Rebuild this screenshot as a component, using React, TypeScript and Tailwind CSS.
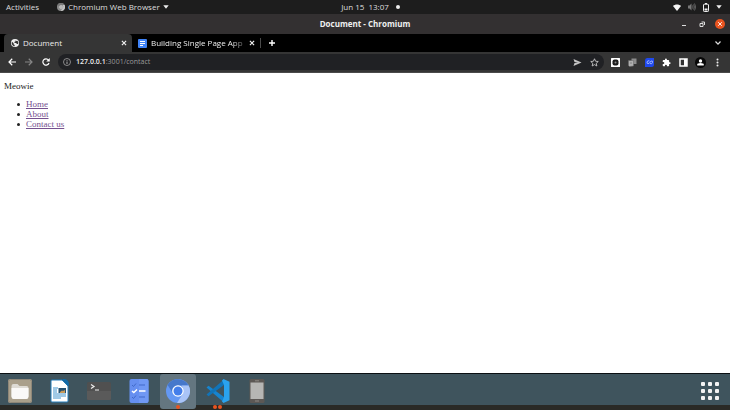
import React from "react";

type IconProps = { className?: string };

const Globe = ({ className }: IconProps) => (
  <svg viewBox="0 0 24 24" className={className} aria-hidden="true">
    <circle cx="12" cy="12" r="12" fill="#f1f1f1" />
    <path d="M3 8l5 5v3l3 2v4C6 21 2 17 2 12zM11 3l3 4-4 2 1 3h5l1 3h4c2-3 1-8-2-10l-4 1z" fill="#353535" />
  </svg>
);

const GrayChromium = () => (
  <svg viewBox="0 0 24 24" className="size-2" aria-hidden="true">
    <circle cx="12" cy="12" r="12" fill="#8d8d8d" />
    <path d="M2 5a12 12 0 0 1 20.500 1H12a6 6 0 0 0-6 6z" fill="#777" />
    <path d="M22.500 6a12 12 0 0 1-11 18l5.500-9a6 6 0 0 0-1-9z" fill="#c4c4c4" />
    <circle cx="12" cy="12" r="4.500" fill="#b5b5b5" stroke="#d4d4d4" strokeWidth="1.500" />
  </svg>
);

const Caret = ({ className }: IconProps) => (
  <svg viewBox="0 0 6 4" className={className ?? "h-1 w-1.5"} aria-hidden="true">
    <path d="M0.300 0.300h5.400L3 3.700z" fill="#eee" />
  </svg>
);

const Cross = () => (
  <svg viewBox="0 0 10 10" className="size-1.5" aria-hidden="true">
    <path d="M1.500 1.500l7 7m0-7l-7 7" stroke="#f2f2f2" strokeWidth="1.900" />
  </svg>
);

const Arrow = ({ className }: IconProps) => (
  <svg viewBox="0 0 16 16" className={className} fill="none" stroke="currentColor" strokeWidth="2.400" aria-hidden="true">
    <path d="M16 8H2M8.500 1.500L2 8l6.500 6.500" />
  </svg>
);

function TopBar() {
  return (
    <header className="grid h-3.5 grid-cols-[1fr_auto_1fr] items-center bg-[#1d1d1d] text-[#dedede]">
      <div className="flex items-center gap-[18px] pl-1.5">
        <button>Activities</button>
        <button className="flex items-center gap-[3px]">
          <GrayChromium />
          <span>Chromium Web Browser</span>
          <Caret />
        </button>
      </div>
      <time className="whitespace-pre">Jun 15  13:07</time>
      <div className="flex items-center justify-between pr-2 pl-[7px]">
        <span className="size-1 rounded-full bg-[#eee]" />
        <div className="flex items-center gap-[7px]">
          <svg viewBox="0 0 16 14" className="h-[7px] w-2" aria-label="Wi-Fi">
            <path d="M0 4C4 0 12 0 16 4L8 14z" fill="#f4f4f4" />
          </svg>
          <svg viewBox="0 0 16 16" className="size-2" fill="none" stroke="#777" strokeWidth="1.500" aria-label="Volume">
            <path d="M0 5h3l4-4v14l-4-4H0z" fill="#777" stroke="none" />
            <path d="M9 5q2 3 0 6M11 3q4 5 0 10M13 1q5 7 0 14" />
          </svg>
          <svg viewBox="0 0 12 18" className="h-[9px] w-1.5" aria-label="Battery">
            <path d="M4 0h4v2H4z" fill="#eee" />
            <rect x="1" y="2.500" width="10" height="14.500" rx="1.500" fill="none" stroke="#eee" strokeWidth="2" />
            <path d="M3 11h6v4H3z" fill="#eee" />
          </svg>
          <Caret />
        </div>
      </div>
    </header>
  );
}

function TitleBar() {
  return (
    <div className="grid h-5 grid-cols-[1fr_auto_1fr] items-center bg-[#333031] font-bold text-[#f0f0f0]">
      <span />
      <h1>Document - Chromium</h1>
      <div className="flex items-center justify-end gap-2 pr-[5px]">
        <button aria-label="Minimise" className="flex size-2.5 items-center justify-center">
          <svg viewBox="0 0 10 10" className="size-2.5"><path d="M3 6.500h4" stroke="#ddd" /></svg>
        </button>
        <button aria-label="Restore" className="size-2.5">
          <svg viewBox="0 0 10 10" className="size-2.5" fill="none" stroke="#ddd">
            <path d="M3 4.500h3v3H3zM4.500 3h3v3" strokeWidth="1" />
          </svg>
        </button>
        <button aria-label="Close" className="size-2.5">
          <svg viewBox="0 0 10 10" className="size-2.5">
            <circle cx="5" cy="5" r="5" fill="#e95420" />
            <path d="M3.200 3.200l3.600 3.600m0-3.600L3.200 6.800" stroke="#fff" strokeWidth="0.900" />
          </svg>
        </button>
      </div>
    </div>
  );
}

function TabStrip() {
  return (
    <div className="flex h-[18px] items-center bg-black pr-2 pl-1 text-[#ececec]">
      <div className="flex h-full w-32 items-center rounded-t-[4px] bg-[#353535] pr-[5px] pl-[7px]">
        <Globe className="mr-1 size-2" />
        <span className="flex-1">Document</span>
        <button aria-label="Close tab"><Cross /></button>
      </div>
      <div className="flex h-full w-32 items-center pr-[5px] pl-1.5">
        <svg viewBox="0 0 18 18" className="mr-1 size-[9px] shrink-0" aria-hidden="true">
          <rect width="18" height="18" rx="2" fill="#3f83f8" />
          <path d="M4 5h10M4 9h10M4 13h6" stroke="#fff" strokeWidth="2" />
        </svg>
        <span className="flex-1 whitespace-nowrap font-medium [mask-image:linear-gradient(to_right,black_82%,transparent)]">
          Building Single Page App
        </span>
        <button aria-label="Close tab" className="shrink-0"><Cross /></button>
      </div>
      <span className="h-2.5 w-px bg-[#4a4a4a]" />
      <button aria-label="New tab" className="ml-[7px]">
        <svg viewBox="0 0 8 8" className="size-2"><path d="M4 1v6M1 4h6" stroke="#fff" strokeWidth="1.400" /></svg>
      </button>
      <button aria-label="Search tabs" className="ml-auto">
        <svg viewBox="0 0 8 8" className="size-2"><path d="M1.500 2.500L4 5.200l2.500-2.700" stroke="#ddd" strokeWidth="1.200" fill="none" /></svg>
      </button>
    </div>
  );
}

function Extensions() {
  return (
    <div className="flex items-center gap-2 text-white">
      <button aria-label="Capture">
        <svg viewBox="0 0 18 18" className="size-[9px]">
          <rect width="18" height="18" rx="1" fill="#fff" />
          <rect x="3" y="3" width="12" height="12" rx="4" fill="#1d1d1d" />
          <circle cx="9" cy="9" r="2" fill="#888" />
        </svg>
      </button>
      <button aria-label="Copies">
        <svg viewBox="0 0 18 18" className="size-[9px]">
          <path d="M7 1h10v11H7z" fill="#8c8c8c" />
          <path d="M1 5h10v11l-8 1-2-2z" fill="#b0b0b0" stroke="#666" />
          <path d="M4 8h4v4H4z" fill="#999" />
        </svg>
      </button>
      <button aria-label="Links">
        <svg viewBox="0 0 18 18" className="size-[9px]">
          <path d="M4 0h14v13q0 5-5 5H0V5q0-5 4-5z" fill="#1f49ee" />
          <path d="M9 6Q5 4 4 8t4 3l4-5q4-1 3 3t-5 2" fill="none" stroke="#c3d1ff" strokeWidth="1.500" />
        </svg>
      </button>
      <button aria-label="Extensions">
        <svg viewBox="0 0 24 24" className="size-[9px]" fill="currentColor">
          <path d="M20.500 11H19V7a2 2 0 0 0-2-2h-4V3.500a2.500 2.500 0 0 0-5 0V5H4a2 2 0 0 0-2 2v3.800h1.500a2.700 2.700 0 0 1 0 5.400H2V20a2 2 0 0 0 2 2h3.800v-1.500a2.700 2.700 0 0 1 5.400 0V22H17a2 2 0 0 0 2-2v-4h1.500a2.500 2.500 0 0 0 0-5z" />
        </svg>
      </button>
      <button aria-label="Side panel">
        <svg viewBox="0 0 18 18" className="size-[9px]">
          <path d="M2 2h14v14H2z" fill="#333" stroke="#fff" strokeWidth="3" />
          <path d="M10 2h6v14h-6z" fill="#fff" />
        </svg>
      </button>
      <button aria-label="Profile" className="-mx-px">
        <svg viewBox="0 0 22 22" className="size-[11px]">
          <circle cx="11" cy="11" r="11" fill="#080808" />
          <circle cx="11" cy="8" r="3.400" fill="#fff" />
          <path d="M4.500 17v-2q0-3 6.500-3t6.500 3v2z" fill="#fff" />
        </svg>
      </button>
      <button aria-label="Menu">
        <svg viewBox="0 0 18 18" className="size-[9px]" fill="#eee">
          <circle cx="9" cy="3" r="2" /><circle cx="9" cy="9" r="2" /><circle cx="9" cy="15" r="2" />
        </svg>
      </button>
    </div>
  );
}

function Toolbar() {
  return (
    <div className="flex h-[21px] items-center border-b border-[#4a4a4a] bg-[#353535] pr-2 pl-2 text-white">
      <div className="flex items-center gap-[9px]">
        <button aria-label="Back"><Arrow className="size-2" /></button>
        <button aria-label="Forward" className="text-[#858585]"><Arrow className="size-2 rotate-180" /></button>
        <button aria-label="Reload">
          <svg viewBox="0 0 16 16" className="size-2" fill="none" stroke="#fff" strokeWidth="2.400">
            <path d="M13 4A6.300 6.300 0 1 0 14 10" />
            <path d="M15.500 0v7h-7z" fill="#fff" stroke="none" />
          </svg>
        </button>
      </div>
      <form className="mr-[7px] ml-2 flex h-4 flex-1 items-center rounded-full bg-[#202124] pr-[5px] pl-[5px] text-[7px]">
        <svg viewBox="0 0 16 16" className="mr-[5px] size-2" fill="none" stroke="#aaa" strokeWidth="1.500" aria-hidden="true">
          <circle cx="8" cy="8" r="7" />
          <path d="M8 7v5M8 4v1.500" strokeWidth="2" />
        </svg>
        <label htmlFor="address" className="font-semibold text-[#f0f0f0]">127.0.0.1</label>
        <input id="address" defaultValue=":3001/contact" className="min-w-0 flex-1 bg-transparent text-[#9a9a9a] outline-none" />
        <button type="button" aria-label="Send" className="mr-2">
          <svg viewBox="0 0 18 18" className="size-[9px]"><path d="M1 2l16 7-16 7 2-6 7-1-7-1z" fill="#c4c4c4" /></svg>
        </button>
        <button type="button" aria-label="Bookmark">
          <svg viewBox="0 0 18 18" className="size-[9px]">
            <path d="M9 1.500l2.200 5 5.300.5-4 3.600 1.200 5.400L9 13.200 4.300 16l1.200-5.400-4-3.600 5.300-.5z" fill="none" stroke="#ccc" strokeWidth="1.700" />
          </svg>
        </button>
      </form>
      <Extensions />
    </div>
  );
}

function Page() {
  return (
    <main className="flex-1 bg-white px-1 pt-2 font-['Liberation_Serif','Times_New_Roman',serif] text-[9px] leading-[10px] text-[#222]">
      <p>Meowie</p>
      <ul className="mt-2 pl-[13px]">
        {["Home", "About", "Contact us"].map((label) => (
          <li key={label} className="flex items-center gap-1.5 before:size-[3px] before:rounded-full before:bg-[#222]">
            <a href="#" className="text-[#75518f] underline">{label}</a>
          </li>
        ))}
      </ul>
    </main>
  );
}

const Files = () => (
  <svg viewBox="0 0 24 24" className="size-6" aria-hidden="true">
    <rect width="24" height="24" rx="2" fill="#aaa08b" />
    <rect x="0.500" y="0.500" width="23" height="23" rx="2" fill="none" stroke="#8f8778" />
    <path d="M3.500 7q0-2 2-2h4l2 2h7q2 0 2 2v8q0 2-2 2h-13q-2 0-2-2z" fill="#dedbd4" />
    <path d="M3.500 9h17v8.500q0 2.500-2 2.500h-13q-2 0-2-2.500z" fill="#faf9f7" />
  </svg>
);

const Writer = () => (
  <svg viewBox="0 0 24 24" className="size-6" aria-hidden="true">
    <path d="M4 1h10l6 6v15q0 1-1 1H4q-1 0-1-1V2q0-1 1-1z" fill="#fff" stroke="#247dba" />
    <path d="M14 0h3q4 1 4 6l-1 1z" fill="#126ba8" />
    <path d="M5 9h5M5 11h4M5 13h4M5 15h13M5 17h13M5 19h8" stroke="#4094ce" />
    <path d="M10.500 9H18v5h-7.500z" fill="#25506f" />
    <path d="M12 13l2-1.500 1 .5 2-1v3h-5z" fill="#c99a58" />
  </svg>
);

const Terminal = () => (
  <svg viewBox="0 0 24 24" className="size-6" aria-hidden="true">
    <rect y="3" width="24" height="18" rx="1.500" fill="#505050" />
    <path d="M0 12h24v7.500q0 1.500-1.500 1.500h-21Q0 21 0 19.500z" fill="#5a5a5a" />
    <path d="M4 5.500l3 2-3 2M8 11h4" fill="none" stroke="#eee" strokeWidth="1.200" />
  </svg>
);

const Tasks = () => (
  <svg viewBox="0 0 24 24" className="size-6" aria-hidden="true">
    <rect x="2.500" width="19" height="24" rx="2" fill="#668ff0" />
    <path d="M12 0h7.500q2 0 2 2v20q0 2-2 2H12z" fill="#7098f4" />
    <path d="M5 6l1.500 1.500L9 4.500M5 18l1.500 1.500L9 16.500M12 6h6M12 18h6" fill="none" stroke="#4069c9" />
    <path d="M5 12l1.800 1.500L10 10.500M12 12h6.500" fill="none" stroke="#fff" strokeWidth="1.500" />
  </svg>
);

const Chromium = () => (
  <svg viewBox="0 0 24 24" className="size-6" aria-hidden="true">
    <circle cx="12" cy="12" r="12" fill="#6498f3" />
    <path d="M1.600 6A12 12 0 0 1 22.400 6.500H12A5.500 5.500 0 0 0 7 14.500z" fill="#4678cb" />
    <path d="M22.600 6.500A12 12 0 0 1 11 24l6-9.500q2-4-1.500-8z" fill="#a9c4f7" />
    <circle cx="12" cy="12" r="5.800" fill="#fff" />
    <circle cx="12" cy="12" r="4.500" fill="#437eea" />
  </svg>
);

const Code = () => (
  <svg viewBox="0 0 24 24" className="size-6" aria-hidden="true">
    <path d="M0.500 8.500l2-1.700L18 18v5.500z" fill="#1684cf" />
    <path d="M0.500 15.500l2 1.700L18 6V.5z" fill="#1174b8" />
    <path d="M17.500 0l6 2.800v18.400l-6 2.800-1.500-1.500 2-4.500V6l-2-4.500z" fill="#2aa3ef" />
  </svg>
);

const Phone = () => (
  <svg viewBox="0 0 24 24" className="size-6" aria-hidden="true">
    <rect x="4.500" width="15" height="24" rx="1.500" fill="#5c5855" />
    <path d="M5.500 3.500h13v16.500h-13z" fill="#b6b6b4" />
    <path d="M10 1.800h4M10 22h4" stroke="#9a9691" strokeWidth="0.800" />
  </svg>
);

const apps = [
  { name: "Files", Icon: Files, windows: 0 },
  { name: "Writer", Icon: Writer, windows: 0 },
  { name: "Terminal", Icon: Terminal, windows: 0 },
  { name: "To Do", Icon: Tasks, windows: 0 },
  { name: "Chromium", Icon: Chromium, windows: 1 },
  { name: "Code", Icon: Code, windows: 2 },
  { name: "Phone", Icon: Phone, windows: 0 },
];

function Dock() {
  return (
    <footer className="flex h-[37px] items-start justify-between border-t border-[#0b1013] bg-[linear-gradient(to_bottom,#3f545d_31px,#2a2a26_31px)] pr-[11px] pl-0.5">
      <nav className="flex w-[273px] justify-between">
        {apps.map(({ name, Icon, windows }) => (
          <button
            key={name}
            aria-label={name}
            className={`flex h-[35px] w-9 flex-col items-center justify-between rounded-[3px] pt-[5px] ${windows === 1 ? "bg-[#647680]" : ""}`}
          >
            <Icon />
            <span className="flex gap-px">
              {Array.from({ length: windows }, (_, i) => (
                <span key={i} className="size-1 rounded-full bg-[#e95420]" />
              ))}
            </span>
          </button>
        ))}
      </nav>
      <button aria-label="Show applications" className="mt-2 grid grid-cols-3 gap-[3px]">
        {Array.from({ length: 9 }, (_, i) => (
          <span key={i} className="size-1 rounded-[1px] bg-[#f4f4f4]" />
        ))}
      </button>
    </footer>
  );
}

export default function App() {
  return (
    <div className="flex min-h-screen flex-col bg-white font-['Open_Sans','Noto_Sans',sans-serif] text-[8px] leading-[10px]">
      <TopBar />
      <TitleBar />
      <TabStrip />
      <Toolbar />
      <Page />
      <Dock />
    </div>
  );
}
